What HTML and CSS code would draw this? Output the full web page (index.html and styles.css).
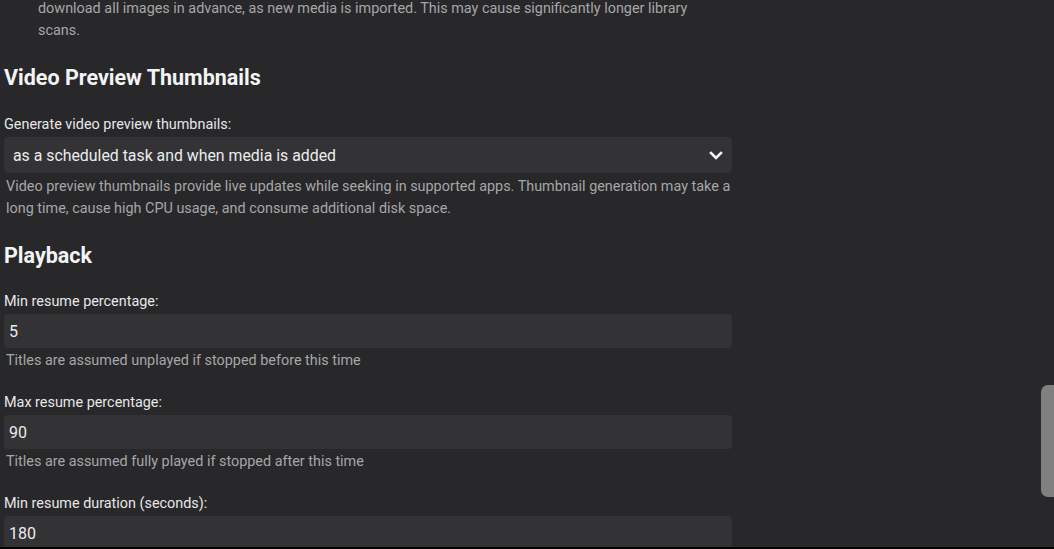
FILE: index.html
```html
<!DOCTYPE html>
<html lang="en">
<head>
<meta charset="utf-8">
<title>Library settings</title>
<link rel="stylesheet" href="styles.css">
</head>
<body>
<div class="viewport">
  <div class="content">
    <p class="check-desc">download all images in advance, as new media is imported. This may cause significantly longer library scans.</p>

    <h2 class="section-title">Video Preview Thumbnails</h2>
    <div class="field field-select">
      <label class="field-label">Generate video preview thumbnails:</label>
      <div class="select">
        <span class="select-value">as a scheduled task and when media is added</span>
        <svg class="chevron" width="14" height="9" viewBox="0 0 14 9"><path d="M2 2 L7 7 L12 2" fill="none" stroke="#f2f2f2" stroke-width="2.6" stroke-linecap="square"/></svg>
      </div>
      <div class="field-desc">Video preview thumbnails provide live updates while seeking in supported apps. Thumbnail generation may take a long time, cause high CPU usage, and consume additional disk space.</div>
    </div>

    <h2 class="section-title section-playback">Playback</h2>
    <div class="field">
      <label class="field-label">Min resume percentage:</label>
      <div class="input">5</div>
      <div class="field-desc">Titles are assumed unplayed if stopped before this time</div>
    </div>
    <div class="field">
      <label class="field-label">Max resume percentage:</label>
      <div class="input">90</div>
      <div class="field-desc">Titles are assumed fully played if stopped after this time</div>
    </div>
    <div class="field">
      <label class="field-label">Min resume duration (seconds):</label>
      <div class="input">180</div>
      <div class="field-desc">The shortest video length in seconds that will save playback location and let you resume</div>
    </div>
  </div>
  <div class="scroll-thumb"></div>
</div>
</body>
</html>
```

FILE: styles.css
```css
html {
  background: #000;
}
body {
  margin: 0;
  font-family: Roboto, "Noto Sans", "Liberation Sans", sans-serif;
  color: #e8e8e8;
}
.viewport {
  position: relative;
  height: 547px;
  overflow: hidden;
  background: #28282b;
}
.content {
  width: 728px;
  padding-left: 4px;
  display: flex;
  flex-direction: column;
}
.check-desc {
  margin: -2px 0 0 0;
  padding-left: 34px;
  font-size: 14.4px;
  line-height: 22px;
  color: #a6a6a6;
}
.section-title {
  margin: 21px 0 20px 0;
  font-size: 21.5px;
  line-height: 30px;
  font-weight: 700;
  color: #f4f4f4;
}
.section-playback {
  margin-bottom: 19px;
}
.field {
  display: flex;
  flex-direction: column;
  margin-bottom: 19px;
}
.field-select {
  margin-bottom: 0;
}
.field-label {
  padding-top: 2px;
  font-size: 14.4px;
  line-height: 20px;
  color: #e6e6e6;
  margin-bottom: 2px;
}
.select {
  height: 36px;
  background: #333336;
  border-radius: 4px;
  display: flex;
  align-items: center;
  justify-content: space-between;
  padding: 0 9px;
  font-size: 15.85px;
  color: #ececec;
}
.input {
  height: 34px;
  background: #333336;
  border-radius: 4px;
  display: flex;
  align-items: center;
  padding: 0 5px;
  font-size: 16px;
  color: #ececec;
}
.field-desc {
  padding: 2px 0 0 2px;
  font-size: 14.4px;
  line-height: 22px;
  color: #a6a6a6;
}
.field-select .field-desc {
  margin-top: 1px;
}
.scroll-thumb {
  position: absolute;
  right: 0;
  top: 385px;
  width: 13px;
  height: 112px;
  border-radius: 7px 0 0 7px;
  background: #808080;
}
```
